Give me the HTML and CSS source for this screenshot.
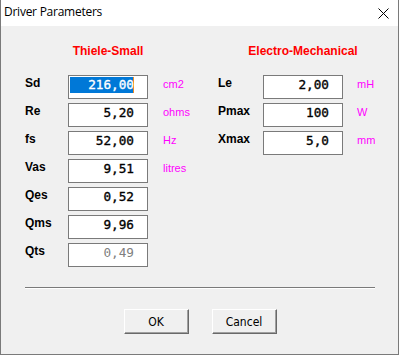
FILE: index.html
```html
<!DOCTYPE html>
<html>
<head>
<meta charset="utf-8">
<link rel="stylesheet" href="styles.css">
</head>
<body>
<div class="window">
  <div class="titlebar">
    <span class="title">Driver Parameters</span>
    <svg class="close" width="11" height="11" viewBox="0 0 11 11"><path d="M0.5 0.5 L10.5 10.5 M10.5 0.5 L0.5 10.5" stroke="#000" stroke-width="1" fill="none"/></svg>
  </div>
  <div class="content">
    <div class="groups">
      <section class="group group-ts">
        <div class="header">Thiele-Small</div>
        <div class="label">Sd</div><div class="field"><div class="val sel">216,00</div></div><div class="unit">cm2</div>
        <div class="label">Re</div><div class="field"><div class="val">5,20</div></div><div class="unit">ohms</div>
        <div class="label">fs</div><div class="field"><div class="val">52,00</div></div><div class="unit">Hz</div>
        <div class="label">Vas</div><div class="field"><div class="val">9,51</div></div><div class="unit">litres</div>
        <div class="label">Qes</div><div class="field"><div class="val">0,52</div></div><div class="unit"></div>
        <div class="label">Qms</div><div class="field"><div class="val">9,96</div></div><div class="unit"></div>
        <div class="label">Qts</div><div class="field"><div class="val disabled">0,49</div></div><div class="unit"></div>
      </section>
      <section class="group group-em">
        <div class="header">Electro-Mechanical</div>
        <div class="label">Le</div><div class="field"><div class="val">2,00</div></div><div class="unit">mH</div>
        <div class="label">Pmax</div><div class="field"><div class="val">100</div></div><div class="unit">W</div>
        <div class="label">Xmax</div><div class="field"><div class="val">5,0</div></div><div class="unit">mm</div>
      </section>
    </div>
    <div class="sep"></div>
    <div class="buttons">
      <button class="btn">OK</button>
      <button class="btn">Cancel</button>
    </div>
  </div>
</div>
</body>
</html>
```
FILE: styles.css
```css
html, body {
  margin: 0;
  padding: 0;
  background: #f0f0f0;
}
.window {
  width: 399px;
  height: 355px;
  box-sizing: border-box;
  border: 1px solid #7a7a7a;
  border-top: none;
  background: #f0f0f0;
  display: flex;
  flex-direction: column;
  overflow: hidden;
}
.titlebar {
  height: 26px;
  background: #ffffff;
  display: flex;
  align-items: flex-start;
  justify-content: space-between;
  flex: none;
}
.title {
  font-family: "Open Sans", "Liberation Sans", sans-serif;
  font-size: 12px;
  letter-spacing: -0.25px;
  line-height: 16px;
  margin: 4px 0 0 3px;
  color: #000;
}
.close {
  margin: 8px 9px 0 0;
  display: block;
}
.content {
  padding: 18px 23px 0 24px;
  display: flex;
  flex-direction: column;
}
.groups {
  display: flex;
}
.group {
  display: grid;
  row-gap: 4px;
  align-content: start;
}
.group-ts {
  grid-template-columns: 43px 80px 70px;
}
.group-em {
  grid-template-columns: 45px 80px auto;
}
.header {
  grid-column: 2;
  display: flex;
  justify-content: center;
  white-space: nowrap;
  font-family: "Liberation Sans", Arial, sans-serif;
  font-weight: bold;
  font-size: 12px;
  line-height: 14px;
  color: #ff0000;
  margin-bottom: 13px;
}
.label {
  grid-column: 1;
  font-family: "Liberation Sans", Arial, sans-serif;
  font-weight: bold;
  font-size: 12px;
  line-height: 14px;
  padding-top: 1px;
  color: #000;
}
.field {
  height: 24px;
  box-sizing: border-box;
  border: 1px solid #7a7a7a;
  background: #fff;
  padding: 1px 13px 0 1px;
}
.val {
  height: 16px;
  line-height: 16px;
  text-align: right;
  font-family: "DejaVu Sans Mono", "Liberation Mono", monospace;
  font-size: 12.7px;
  -webkit-text-stroke: 0.35px currentColor;
  color: #000;
  white-space: nowrap;
}
.val.sel {
  background: #0078d7;
  color: #fff;
  box-shadow: inset -1px 0 0 #f08a24;
}
.val.disabled {
  color: #808080;
  -webkit-text-stroke: 0;
}
.unit {
  font-family: "Liberation Sans", Arial, sans-serif;
  font-size: 11px;
  line-height: 13px;
  padding: 3px 0 0 15px;
  color: #ff00ff;
}
.group-em .unit {
  padding-left: 14px;
}
.sep {
  margin-top: 20px;
  height: 1px;
  background: #7a7a7a;
  border-bottom: 1px solid #ffffff;
}
.buttons {
  margin-top: 20px;
  display: flex;
  justify-content: center;
  gap: 23px;
}
.btn {
  width: 65px;
  height: 25px;
  box-sizing: border-box;
  margin: 0;
  padding: 0;
  background: #f0f0f0;
  border: 1px solid;
  border-color: #ffffff #696969 #696969 #ffffff;
  box-shadow: inset -1px -1px 0 #a0a0a0;
  font-family: "Liberation Sans Narrow", "DejaVu Sans Condensed", "Liberation Sans", sans-serif;
  font-size: 12px;
  color: #000;
}
```
